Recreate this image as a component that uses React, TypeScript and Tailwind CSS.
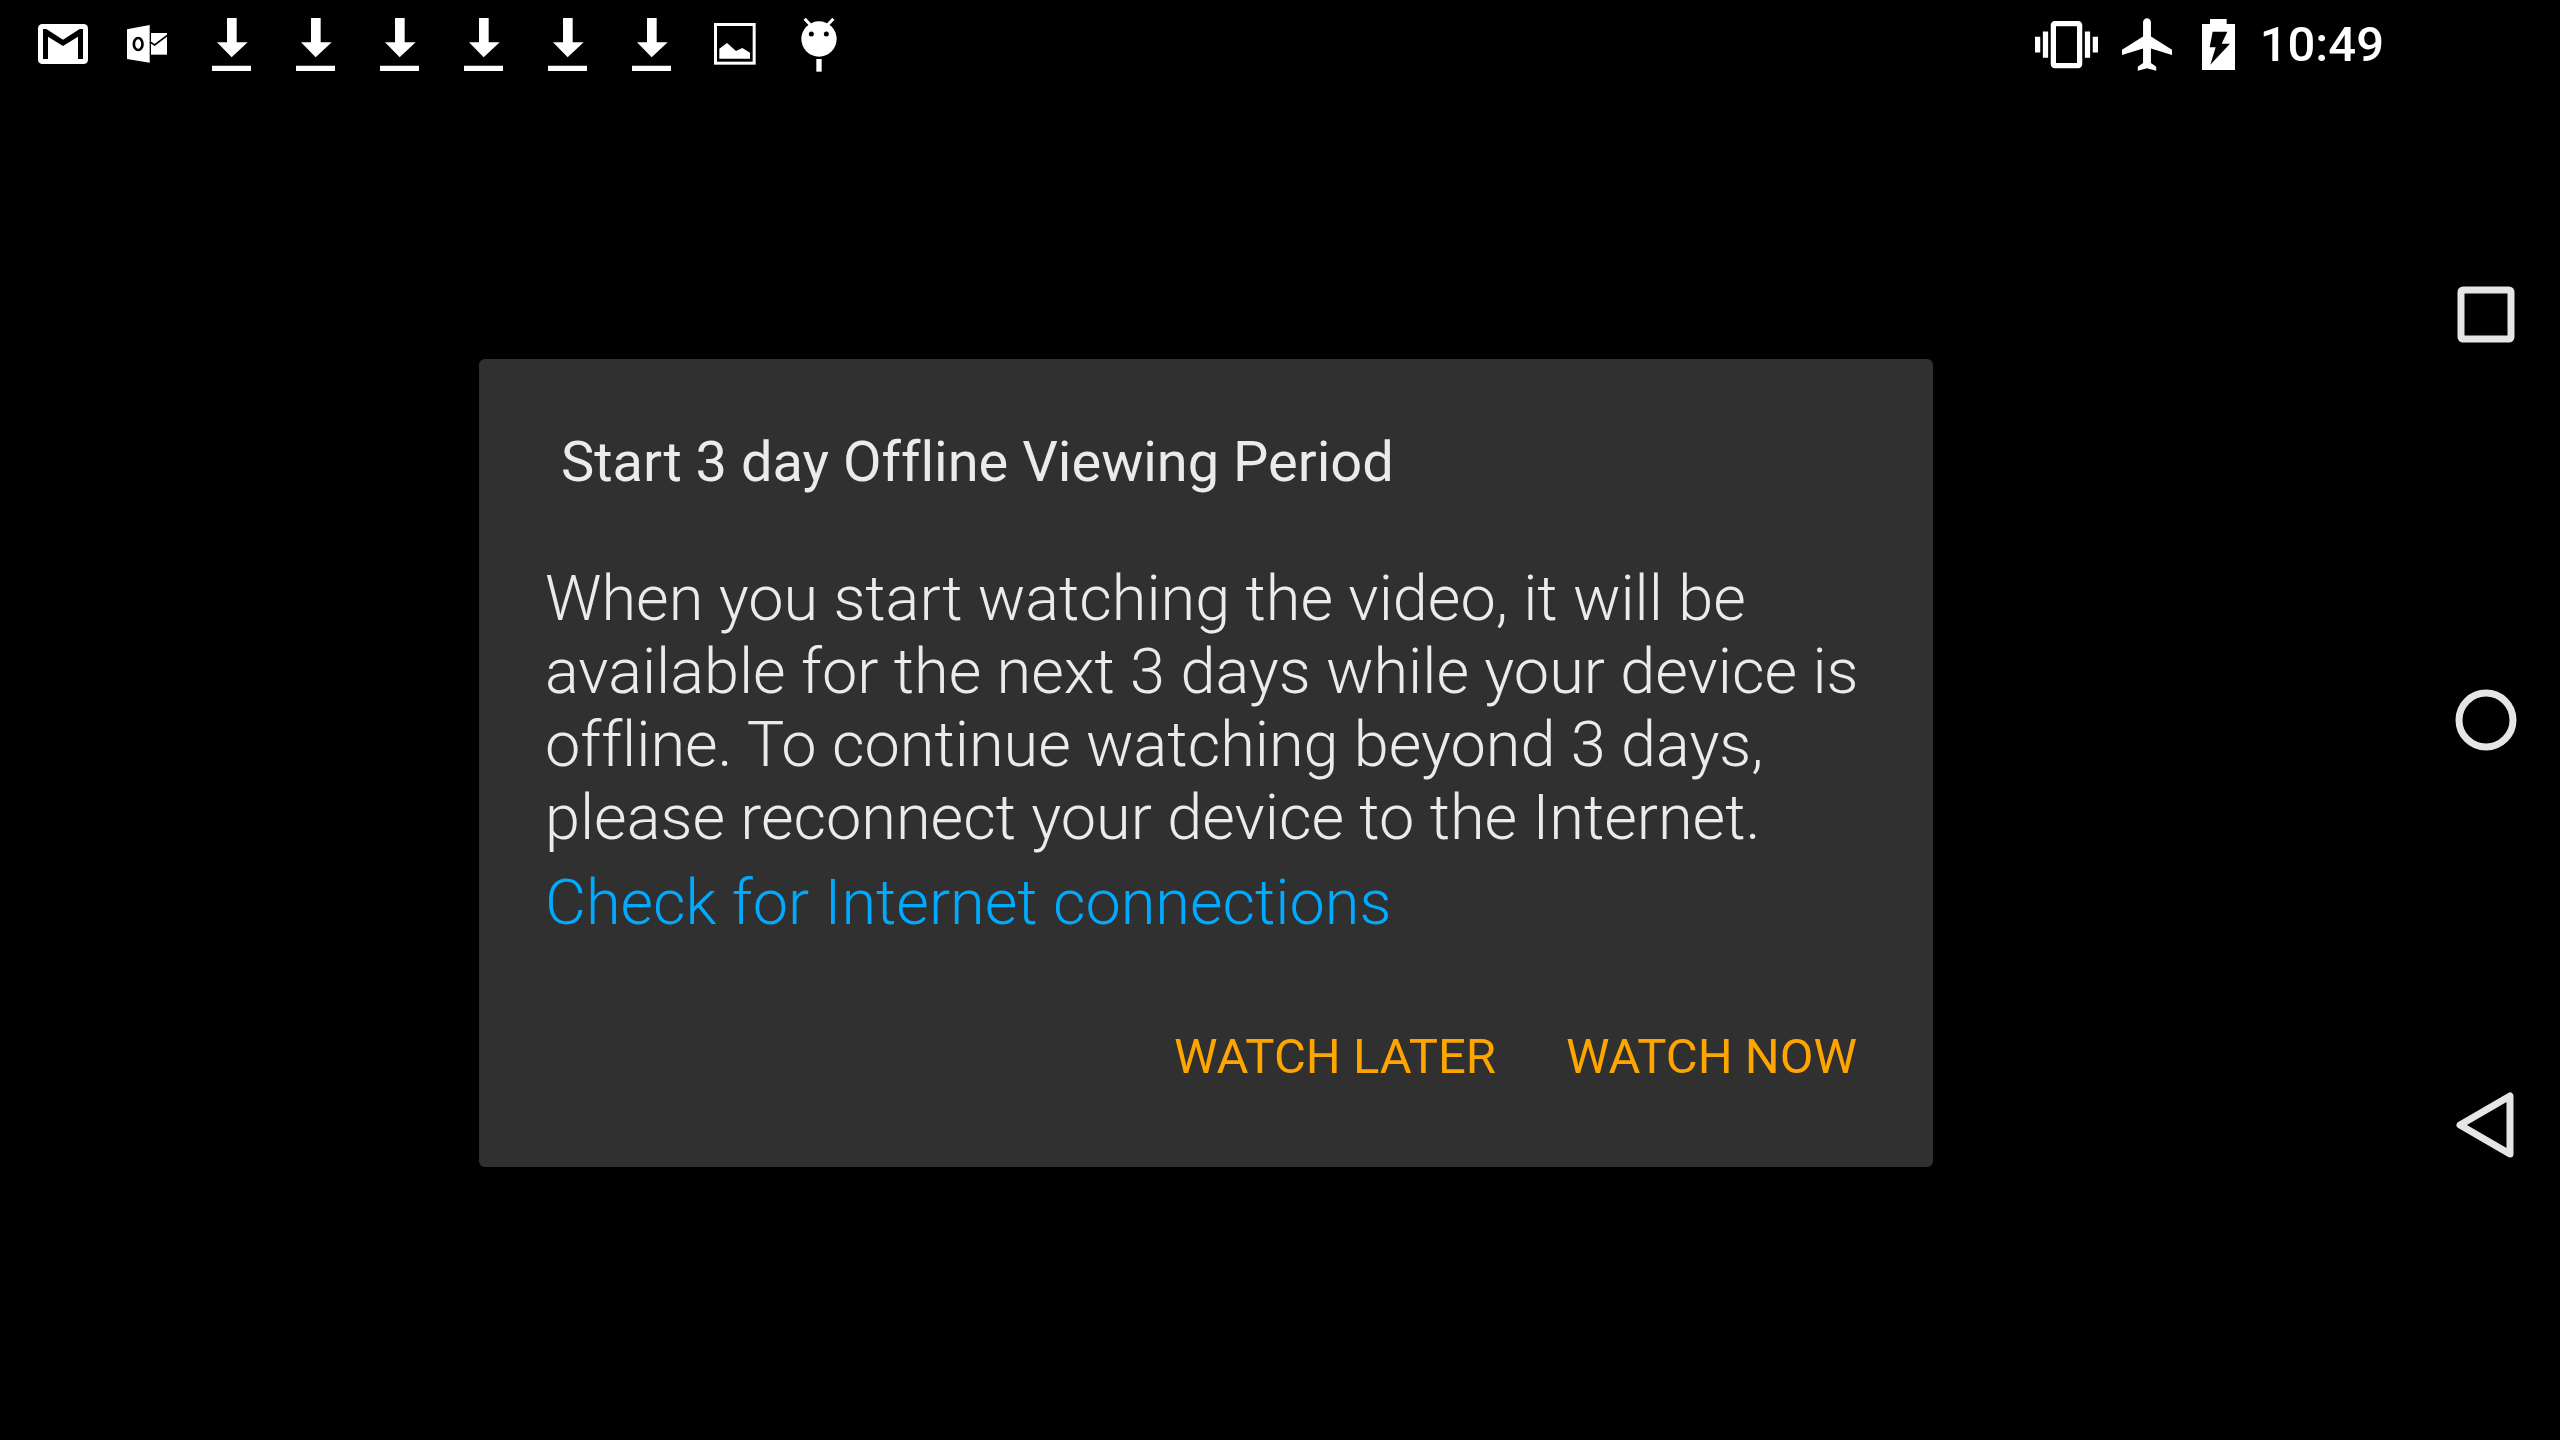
import type { ReactNode } from "react";

function StatusIcon({ label, viewBox, children }: { label: string; viewBox: string; children: ReactNode }) {
  return (
    <svg role="img" aria-label={label} viewBox={viewBox} className="h-[84px] w-[84px] shrink-0 fill-white">
      {children}
    </svg>
  );
}

function GmailIcon() {
  return (
    <StatusIcon label="Gmail" viewBox="63 0 252 252">
      <rect x="114" y="72" width="150" height="120" rx="13" />
      <path className="fill-black" d="M129 87h10l50 32 50-32h10v90h-15v-67l-45 28-45-28v67h-15z" />
    </StatusIcon>
  );
}

function OutlookIcon() {
  return (
    <StatusIcon label="Outlook" viewBox="315 0 252 252">
      <path d="M381 88l68-13v113l-68-11z" />
      <ellipse cx="414.500" cy="132" rx="13" ry="18" className="fill-none stroke-black" strokeWidth="8" />
      <path d="M453 99h48v65h-48z" />
      <path d="M450 126l14 9 38-29" className="fill-none stroke-black" strokeWidth="5" />
    </StatusIcon>
  );
}

function DownloadIcon() {
  return (
    <StatusIcon label="Download complete" viewBox="567 0 252 252">
      <path d="M681 54h29v73h33l-48 45-44-45h30z" />
      <path d="M636 197h117v16H636z" />
    </StatusIcon>
  );
}

function PictureIcon() {
  return (
    <StatusIcon label="Screenshot saved" viewBox="279 0 252 252">
      <rect x="346.500" y="73.500" width="116" height="116" className="fill-none stroke-white" strokeWidth="9" />
      <path d="M358 146l23-17 27 24 19-9 23 14v18h-92z" />
    </StatusIcon>
  );
}

function DebugIcon() {
  return (
    <StatusIcon label="Debugging" viewBox="531 0 252 252">
      <circle cx="657" cy="117" r="53" />
      <path d="M614 56l18 20M700 56l-18 20" className="stroke-white" strokeWidth="9" />
      <circle cx="634" cy="102" r="7.500" className="fill-black" />
      <circle cx="679" cy="102" r="7.500" className="fill-black" />
      <path d="M649 177h16v38h-16z" />
    </StatusIcon>
  );
}

function StatusBar() {
  return (
    <header className="flex h-[84px] items-center justify-between pr-7 pl-[21px]">
      <div className="flex">
        <GmailIcon />
        <OutlookIcon />
        {[1, 2, 3, 4, 5, 6].map((n) => (
          <DownloadIcon key={n} />
        ))}
        <PictureIcon />
        <DebugIcon />
      </div>
      <div className="flex items-center pt-[5px]">
        <svg role="img" aria-label="Vibrate" viewBox="0 0 24 24" className="mr-6 h-[63px] w-[63px] fill-white">
          <path d="M0 15h2V9H0v6zm3 2h2V7H3v10zm19-8v6h2V9h-2zm-3 8h2V7h-2v10zM16.500 3h-9C6.670 3 6 3.670 6 4.500v15c0 .83.67 1.500 1.500 1.500h9c.83 0 1.500-.67 1.500-1.500v-15c0-.83-.67-1.500-1.500-1.500zM16 19H8V5h8v14z" />
        </svg>
        <svg role="img" aria-label="Airplane mode" viewBox="2 2 19 20" className="mr-[30px] h-[53px] w-[50px] fill-white">
          <path d="M21 16v-2l-8-5V3.500c0-.83-.67-1.500-1.500-1.500S10 2.670 10 3.500V9l-8 5v2l8-2.500V19l-2 1.500V22l3.500-1 3.500 1v-1.500L13 19v-5.500l8 2.500z" />
        </svg>
        <svg role="img" aria-label="Battery charging" viewBox="576 54 99 153" className="mr-[25px] h-[51px] w-[33px] fill-white">
          <path d="M600 54h50v15h25v138h-99V69h24z" />
          <path className="fill-black" d="M608 92h44l-17 36h25l-59 63 16-52h-18z" />
        </svg>
        <time className="text-[49px] leading-[57px] font-medium text-white">10:49</time>
      </div>
    </header>
  );
}

function NavButton({ label, children }: { label: string; children: ReactNode }) {
  return (
    <button type="button" aria-label={label} className="flex flex-1 items-center justify-center">
      <svg viewBox="0 0 84 84" className="h-[84px] w-[84px] fill-none stroke-[#e5e5e5]" strokeWidth="7" strokeLinejoin="round">
        {children}
      </svg>
    </button>
  );
}

function NavigationBar() {
  return (
    <nav aria-label="System navigation" className="flex w-[148px] shrink-0 flex-col py-28">
      <NavButton label="Recent apps">
        <rect x="17" y="17" width="50" height="49" rx="2" />
      </NavButton>
      <NavButton label="Home">
        <circle cx="42" cy="42" r="27" />
      </NavButton>
      <NavButton label="Back">
        <path d="M16 42L66 13v58z" />
      </NavButton>
    </nav>
  );
}

function OfflineDialog() {
  return (
    <section
      role="dialog"
      aria-labelledby="dialog-title"
      className="w-full max-w-[1454px] rounded-[6px] bg-[#303030] px-[66px] pt-[70px] pb-[82px] text-[#ebebeb]"
    >
      <h1 id="dialog-title" className="pl-4 text-[56px] leading-[66px] font-normal">
        Start 3 day Offline Viewing Period
      </h1>
      <p className="mt-[67px] text-[63px] leading-[73px] font-light">
        When you start watching the video, it will be available for the next 3 days while your device is offline. To
        continue watching beyond 3 days, please reconnect your device to the Internet.
      </p>
      <a href="#connections" className="mt-3 block text-[63px] leading-[73px] font-light text-[#00aaff]">
        Check for Internet connections
      </a>
      <div className="mt-[89px] flex justify-end gap-[70px] pr-[10px] text-[49px] leading-[57px] text-[#ffa500]">
        <button type="button">WATCH LATER</button>
        <button type="button">WATCH NOW</button>
      </div>
    </section>
  );
}

export default function App() {
  return (
    <div className="flex min-h-screen bg-black font-[Roboto,sans-serif] [font-variant-ligatures:none]">
      <div className="flex min-w-0 flex-1 flex-col">
        <StatusBar />
        <main className="flex flex-1 items-center justify-center pt-0.5">
          <OfflineDialog />
        </main>
      </div>
      <NavigationBar />
    </div>
  );
}
